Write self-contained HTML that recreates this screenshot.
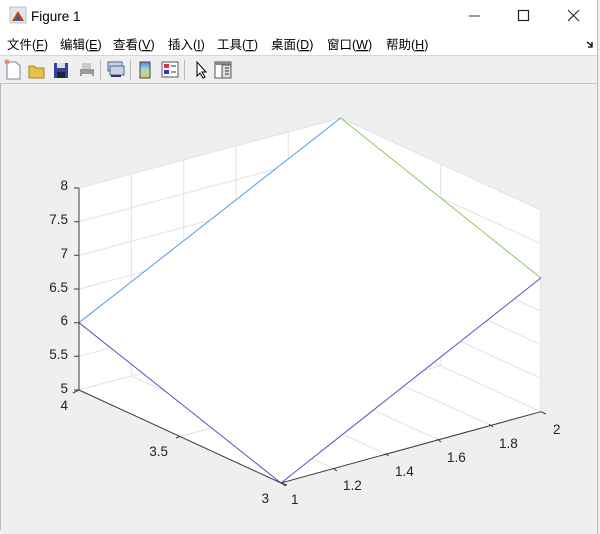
<!DOCTYPE html>
<html><head><meta charset="utf-8"><style>
html,body{margin:0;padding:0;width:600px;height:534px;overflow:hidden;background:#fff}
svg{display:block}
text{font-family:"Liberation Sans","Noto Sans CJK SC",sans-serif}
</style></head><body>
<svg width="600" height="534" viewBox="0 0 600 534" xmlns="http://www.w3.org/2000/svg">
<!-- window bg -->
<rect x="0" y="0" width="600" height="534" fill="#efefef"/>
<rect x="0" y="0" width="597" height="56" fill="#fff"/>
<!-- title bar -->
<g transform="translate(10,7)">
<rect x="0" y="0" width="16" height="16" fill="#dfe6ee" stroke="#8aa" stroke-width="0.6"/>
<path d="M2 14 L8 4 L11 9 L14 14 Z" fill="#c04010"/>
<path d="M5 14 L8 8 L10 14Z" fill="#2060c0"/>
</g>
<text x="31" y="21" font-size="13.5" fill="#000">Figure 1</text>
<line x1="469" y1="16" x2="480" y2="16" stroke="#333" stroke-width="1"/>
<rect x="518.5" y="10.5" width="10" height="10" fill="none" stroke="#222" stroke-width="1.2"/>
<path d="M568 10 L579 21 M579 10 L568 21" stroke="#222" stroke-width="1.1"/>
<!-- menu -->
<g font-size="12.5" fill="#000">
<text x="7" y="49">文件(<tspan text-decoration="underline">F</tspan>)</text>
<text x="60" y="49">编辑(<tspan text-decoration="underline">E</tspan>)</text>
<text x="113" y="49">查看(<tspan text-decoration="underline">V</tspan>)</text>
<text x="168" y="49">插入(<tspan text-decoration="underline">I</tspan>)</text>
<text x="217" y="49">工具(<tspan text-decoration="underline">T</tspan>)</text>
<text x="271" y="49">桌面(<tspan text-decoration="underline">D</tspan>)</text>
<text x="327" y="49">窗口(<tspan text-decoration="underline">W</tspan>)</text>
<text x="386" y="49">帮助(<tspan text-decoration="underline">H</tspan>)</text>
</g>
<path d="M587 42 L592 46 M592 42 L592 47 L588 47" stroke="#000" stroke-width="1.3" fill="none"/>
<line x1="0" y1="55.5" x2="597" y2="55.5" stroke="#d6d6d6"/>
<!-- toolbar -->
<rect x="0" y="56" width="597" height="27" fill="#efefef"/>
<line x1="0" y1="83.5" x2="597" y2="83.5" stroke="#c8c8c8"/>
<g>
<path d="M7 62 h9 l4 4 v13 h-13z" fill="#fff" stroke="#6c8aa8"/><circle cx="7" cy="62" r="2.5" fill="#e87"/>
<path d="M29 66 h5 l2 2 h8 v10 h-15z" fill="#e8c050" stroke="#a88020"/>
<rect x="54" y="63" width="14" height="15" fill="#3540a0"/><rect x="57" y="63" width="8" height="5" fill="#ddd"/><rect x="57" y="72" width="8" height="6" fill="#223"/>
<path d="M80 69 h14 v7 h-14z" fill="#999"/><rect x="82" y="63" width="9" height="6" fill="#ccc"/><rect x="82" y="74" width="10" height="4" fill="#eee"/>
<line x1="100.5" y1="60" x2="100.5" y2="80" stroke="#bbb"/>
<rect x="108" y="62" width="14" height="9" fill="#c8d4e4" stroke="#4a6a90"/><rect x="110" y="66" width="14" height="9" fill="#c8d4e4" stroke="#4a6a90"/><path d="M111 76 h10" stroke="#335" stroke-width="2"/>
<line x1="130.5" y1="60" x2="130.5" y2="80" stroke="#bbb"/>
<defs><linearGradient id="cb" x1="0" y1="0" x2="0" y2="1"><stop offset="0" stop-color="#6080e0"/><stop offset="0.5" stop-color="#a0e0c0"/><stop offset="1" stop-color="#f0c060"/></linearGradient></defs>
<rect x="140" y="62" width="10" height="16" fill="url(#cb)" stroke="#445"/>
<rect x="162" y="62" width="16" height="15" fill="#fff" stroke="#556"/><rect x="164" y="64" width="5" height="4" fill="#d33"/><rect x="164" y="70" width="5" height="4" fill="#33c"/><path d="M171 66h5M171 72h5" stroke="#333"/>
<line x1="184.5" y1="60" x2="184.5" y2="80" stroke="#bbb"/>
<path d="M197 62 v14 l3-3 l3 5 l2-1 l-3-5 h4z" fill="#fff" stroke="#000"/>
<rect x="215" y="62" width="16" height="16" fill="#fff" stroke="#555"/><rect x="215" y="62" width="16" height="3" fill="#888"/><rect x="222" y="65" width="9" height="13" fill="#ddd" stroke="#555"/><path d="M225 68h4M225 71h4M225 74h4" stroke="#333"/>
</g>
<!-- window right border -->
<line x1="597.5" y1="0" x2="597.5" y2="534" stroke="#bbb"/>
<line x1="0.5" y1="84" x2="0.5" y2="530" stroke="#bbb"/>
<!-- plot -->
<g fill="none" stroke-width="1">
<!-- back walls -->
<polygon points="79,188 340.6,118 340.6,320 79,390" fill="#fff" stroke="none"/>
<polygon points="340.6,118 540.8,210 540.8,411.7 340.6,320" fill="#fff" stroke="none"/>
<polygon points="79,390 340.6,320 540.8,411.7 281,483" fill="#fff" stroke="none"/>
<g stroke="#e2e2e2">
<!-- left wall horizontals -->
<path d="M79 188L340.6 118M79 221.7L340.6 151.7M79 255.3L340.6 185.3M79 289L340.6 219M79 322.7L340.6 252.7M79 356.3L340.6 286.3M79 390L340.6 320"/>
<!-- right wall horizontals -->
<path d="M340.6 118L540.8 210M340.6 151.7L540.8 243.7M340.6 185.3L540.8 277.3M340.6 219L540.8 311M340.6 252.7L540.8 344.7M340.6 286.3L540.8 378.3M340.6 320L540.8 411.7"/>
<!-- left wall verticals -->
<path d="M131.3 174V376M183.7 160V362M236 146V348M288.3 132V334"/>
<!-- right wall vertical -->
<path d="M440.7 164V366M540.8 210V411.7"/>
<!-- floor -->
<path d="M131.3 376L333 468.3M183.7 362L385 453.7M236 348L437 439M288.3 334L489 424.3M180 436.5L440.7 366"/>
</g>
<!-- surface -->
<polygon points="79,322.7 340.6,118 540.8,278 281,483" fill="#fff" stroke="none"/>
<line x1="79" y1="322.7" x2="340.6" y2="118" stroke="#4d9bea"/>
<line x1="340.6" y1="118" x2="540.8" y2="278" stroke="#8dc65a"/>
<line x1="540.8" y1="278" x2="281" y2="483" stroke="#5a4ec8"/>
<line x1="79" y1="322.7" x2="281" y2="483" stroke="#5a4ec8"/>
<!-- axes -->
<g stroke="#3c3c3c">
<path d="M79 188V390L281 483L540.8 411.7"/>
<path d="M79 188h-5M79 221.7h-5M79 255.3h-5M79 289h-5M79 322.7h-5M79 356.3h-5M79 390h-5"/>
<path d="M79 390L73 393M180 436.5L176 438M281 483L287 485"/>
<path d="M281 483L286 486M333 468.3L337 471M385 453.7L389 456M437 439L441 442M489 424.3L493 427M540.8 411.7L546 414"/>
</g>
</g>
<g font-size="13.5" fill="#222">
<g text-anchor="end">
<text x="68" y="190">8</text>
<text x="68" y="224">7.5</text>
<text x="68" y="258">7</text>
<text x="68" y="292">6.5</text>
<text x="68" y="325">6</text>
<text x="68" y="359">5.5</text>
<text x="68" y="393">5</text>
<text x="68" y="410">4</text>
<text x="168" y="456">3.5</text>
<text x="269" y="503">3</text>
</g>
<text x="291" y="504">1</text>
<text x="343" y="490">1.2</text>
<text x="395" y="476">1.4</text>
<text x="447" y="462">1.6</text>
<text x="499" y="448">1.8</text>
<text x="553" y="434">2</text>
</g>
</svg>
</body></html>
